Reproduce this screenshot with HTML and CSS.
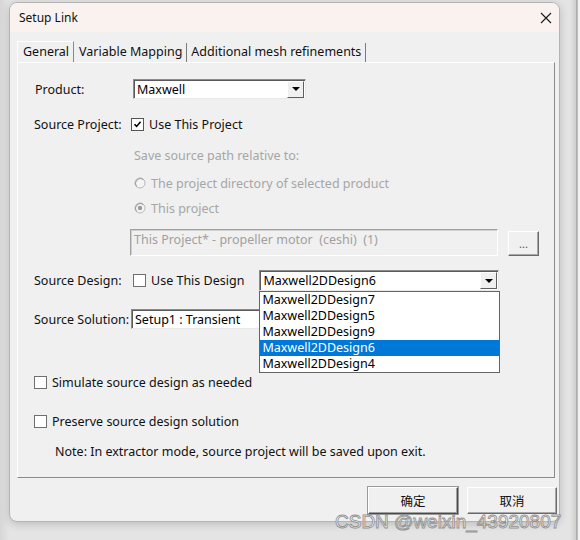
FILE: index.html
```html
<!DOCTYPE html>
<html>
<head>
<meta charset="utf-8">
<link rel="stylesheet" href="styles.css">
</head>
<body>
<div class="desk">
  <div class="dialog">
    <div class="titlebar">
      <span class="title">Setup Link</span>
      <svg class="close" width="12" height="12" viewBox="0 0 12 12"><path d="M1 1L11 11M11 1L1 11" stroke="#1a1a1a" stroke-width="1.1" fill="none"/></svg>
    </div>
    <div class="body">
      <div class="tabs">
        <div class="tab sel">General</div>
        <div class="tab">Variable Mapping</div>
        <div class="tab">Additional mesh refinements</div>
      </div>
      <div class="panel">
        <div class="row r-product">
          <span class="label">Product:</span>
          <div class="combo w-product"><span class="ctext">Maxwell</span><span class="arrow"><i></i></span></div>
        </div>
        <div class="row r-proj">
          <span class="label lab-proj">Source Project:</span>
          <span class="check on"><svg width="9" height="9" viewBox="0 0 9 9"><path d="M1.5 4.2L3.6 6.4L7.6 1.8" stroke="#000" stroke-width="1.6" fill="none"/></svg></span>
          <span class="ctext-l">Use This Project</span>
        </div>
        <div class="row r-save dis">Save source path relative to:</div>
        <div class="row r-rad1 dis">
          <svg class="radio" width="12" height="12" viewBox="0 0 12 12"><circle cx="6" cy="6" r="5" fill="#f4f4f4" stroke="#b8b8b8"/><path d="M2.5 9.5A5 5 0 0 1 9.5 2.5" stroke="#9a9a9a" fill="none"/></svg>
          <span>The project directory of selected product</span>
        </div>
        <div class="row r-rad2 dis">
          <svg class="radio" width="12" height="12" viewBox="0 0 12 12"><circle cx="6" cy="6" r="5" fill="#f4f4f4" stroke="#b8b8b8"/><path d="M2.5 9.5A5 5 0 0 1 9.5 2.5" stroke="#9a9a9a" fill="none"/><circle cx="6" cy="6" r="2.2" fill="#9a9a9a"/></svg>
          <span>This project</span>
        </div>
        <div class="row r-path">
          <div class="pathbox">This Project* - propeller motor &nbsp;(ceshi) &nbsp;(1)</div>
          <div class="btn3d dots">...</div>
        </div>
        <div class="row r-design">
          <span class="label lab-design">Source Design:</span>
          <span class="check"></span>
          <span class="ctext-l">Use This Design</span>
          <div class="combo w-design"><span class="ctext">Maxwell2DDesign6</span><span class="arrow"><i></i></span>
            <ul class="droplist">
              <li>Maxwell2DDesign7</li>
              <li>Maxwell2DDesign5</li>
              <li>Maxwell2DDesign9</li>
              <li class="hl">Maxwell2DDesign6</li>
              <li>Maxwell2DDesign4</li>
            </ul>
          </div>
        </div>
        <div class="row r-sol">
          <span class="label lab-sol">Source Solution:</span>
          <div class="combo w-sol"><span class="ctext">Setup1 : Transient</span></div>
        </div>
        <div class="row r-sim">
          <span class="check"></span>
          <span class="ctext-l">Simulate source design as needed</span>
        </div>
        <div class="row r-pres">
          <span class="check"></span>
          <span class="ctext-l">Preserve source design solution</span>
        </div>
        <div class="row r-note">Note: In extractor mode, source project will be saved upon exit.</div>
      </div>
      <div class="buttons">
        <div class="btn3d okbtn">确定</div>
        <div class="btn3d">取消</div>
      </div>
    </div>
  </div>
  <div class="watermark">CSDN @weixin_43920807</div>
</div>
</body>
</html>
```
FILE: styles.css
```css
* { box-sizing: border-box; }
html, body { margin: 0; padding: 0; }
body {
  width: 580px; height: 540px; overflow: hidden;
  background: #dedede;
  font-family: "Noto Sans", "Noto Sans CJK SC", sans-serif;
  font-size: 12px; color: #111;
}
.desk {
  position: relative; width: 580px; height: 540px;
  padding: 2px 0 0 9px;
  background: linear-gradient(to right, #d6d6d6 0, #e4e4e4 9px, #e4e4e4 570px, #cfcfcf 576px, #8a8a8a 577px, #f2f2f2 578px);
}
.dialog {
  width: 551px; height: 520px;
  border: 1px solid #b4b4b4; border-radius: 8px;
  background: #f0f0f0; overflow: hidden;
  box-shadow: 0 2px 8px rgba(0,0,0,0.18);
  display: flex; flex-direction: column;
}
.titlebar {
  height: 29px; flex: none;
  background: #f9f2ee;
  display: flex; align-items: center; justify-content: space-between;
  padding: 0 7px 0 9px;
}
.title { font-size: 12px; color: #111; }
.body { padding: 9px 5px 0 7px; display: flex; flex-direction: column; }
.tabs { display: flex; height: 21px; align-items: flex-end; }
.tab {
  height: 19px; padding: 0 4px 0 4px; line-height: 18px;
  border-right: 1px solid #7a7a7a; font-size: 12.5px; color: #111;
}
.tab.sel {
  height: 21px; line-height: 20px; padding: 0 4px 0 5px;
  border-left: 1px solid #fff; border-top: 1px solid #fff;
  border-right: 1px solid #8a8a8a;
  background: #f0f0f0;
  margin-right: 1px;
}
.panel {
  width: 538px; height: 416px;
  border: 1px solid #fff; border-right-color: #8a8a8a; border-bottom-color: #8a8a8a;
  padding: 0 0 0 16px;
  display: flex; flex-direction: column;
  position: relative;
}
.row { display: flex; align-items: center; height: 20px; flex: none; white-space: nowrap; }
.label { font-size: 12.5px; }
.r-product { margin-top: 16px; }
.r-product .label { width: 99px; padding-left: 1px; }
.r-proj { margin-top: 15px; }
.lab-proj { width: 97px; }
.r-save { margin-top: 11px; padding-left: 100px; }
.r-rad1 { margin-top: 8px; padding-left: 100px; }
.r-rad2 { margin-top: 5px; padding-left: 100px; }
.radio { margin-right: 5px; }
.dis { color: #a6a6a6; font-size: 12.5px; }
.r-path { margin-top: 11px; height: 27px; padding-left: 96px; }
.r-design { margin-top: 14px; height: 21px; }
.lab-design { width: 99px; }
.r-sol { margin-top: 18px; }
.lab-sol { width: 97px; }
.r-sim { margin-top: 43px; }
.r-pres { margin-top: 19px; }
.r-note { margin-top: 10px; padding-left: 21px; font-size: 12.5px; }
.ctext-l { font-size: 12.5px; margin-left: 5px; }
.r-design .ctext-l { margin-right: 15px; }

.check {
  width: 13px; height: 13px; flex: none;
  background: #fff; border: 1px solid #555;
  display: inline-flex; align-items: center; justify-content: center;
}
.r-design .check, .r-sim .check, .r-pres .check { border-color: #6f6f6f; }

.combo {
  height: 20px; position: relative; flex: none;
  background: #fff;
  border: 1px solid; border-color: #8a8a8a #e8e8e8 #e8e8e8 #8a8a8a;
  box-shadow: inset 1px 1px 0 #5a5a5a;
  display: flex; align-items: center; justify-content: space-between;
}
.w-product { width: 173px; }
.w-design { width: 240px; height: 21px; }
.w-sol { width: 200px; }
.ctext { padding-left: 3px; font-size: 12.5px; color: #000; }
.arrow {
  width: 17px; height: 17px; margin-right: 1px;
  background: #f0f0f0;
  border: 1px solid; border-color: #fff #5f5f5f #5f5f5f #fff;
  display: flex; align-items: center; justify-content: center;
}
.arrow i {
  width: 0; height: 0;
  border-left: 4px solid transparent; border-right: 4px solid transparent;
  border-top: 4px solid #000;
}
.droplist {
  position: absolute; left: -1px; top: 20px;
  width: 241px; margin: 0; padding: 0; list-style: none;
  background: #fff; border: 1px solid #646464;
  z-index: 5;
}
.droplist li {
  height: 16px; line-height: 16px; padding-left: 2px;
  font-size: 12.5px; color: #000;
}
.droplist li.hl { background: #0078d7; color: #fff; }

.pathbox {
  width: 368px; height: 27px;
  border: 1px solid; border-color: #a0a0a0 #fff #fff #a0a0a0;
  box-shadow: inset 1px 1px 0 #d0d0d0;
  color: #a0a0a0; font-size: 12.5px;
  padding: 1px 0 0 3px;
}
.btn3d {
  display: flex; align-items: center; justify-content: center;
  background: #f0f0f0;
  border: 1px solid; border-color: #fff #6a6a6a #6a6a6a #fff;
  box-shadow: inset -1px -1px 0 #a8a8a8;
}
.dots { width: 31px; height: 25px; margin-left: 10px; margin-top: 1px; color: #555; font-size: 11px; }
.buttons { display: flex; justify-content: flex-end; gap: 9px; margin-top: 9px; margin-right: -3px; }
.buttons .btn3d { width: 90px; height: 27px; font-size: 12.5px; color: #111; }
.okbtn { border-color: #fff #4a4a4a #4a4a4a #fff; box-shadow: inset -1px -1px 0 #a0a0a0, 0 0 0 1px #9a9a9a; }

.watermark {
  position: absolute; left: 335px; top: 512px;
  font-family: "Liberation Sans", Arial, sans-serif; font-size: 19px; line-height: 20px;
  color: #fff;
  -webkit-text-stroke: 0.9px #8a8a8a;
  opacity: 0.9;
}
```
